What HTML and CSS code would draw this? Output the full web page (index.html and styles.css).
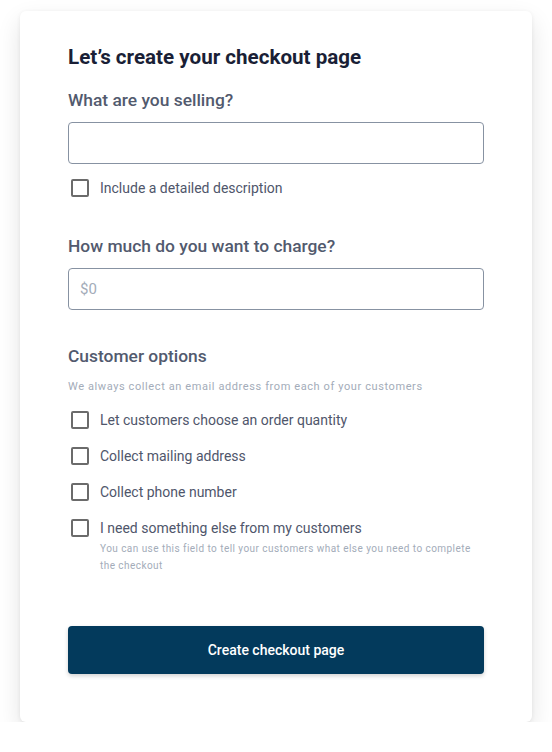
FILE: index.html
```html
<!DOCTYPE html>
<html>
<head>
<meta charset="utf-8">
<link rel="stylesheet" href="styles.css">
</head>
<body>
<div class="card">
  <h1 class="title">Let’s create your checkout page</h1>

  <div class="section s1">
    <div class="label">What are you selling?</div>
    <div class="input"></div>
    <div class="check-row first">
      <span class="box"></span>
      <span class="check-text">Include a detailed description</span>
    </div>
  </div>

  <div class="section s2">
    <div class="label">How much do you want to charge?</div>
    <div class="input"><span class="placeholder">$0</span></div>
  </div>

  <div class="section s3">
    <div class="label">Customer options</div>
    <div class="helper">We always collect an email address from each of your customers</div>
    <div class="check-list">
      <div class="check-row">
        <span class="box"></span>
        <span class="check-text">Let customers choose an order quantity</span>
      </div>
      <div class="check-row">
        <span class="box"></span>
        <span class="check-text">Collect mailing address</span>
      </div>
      <div class="check-row">
        <span class="box"></span>
        <span class="check-text">Collect phone number</span>
      </div>
      <div class="check-row top">
        <span class="box"></span>
        <div class="check-body">
          <span class="check-text">I need something else from my customers</span>
          <div class="sub">You can use this field to tell your customers what else you need to complete the checkout</div>
        </div>
      </div>
    </div>
  </div>

  <button class="btn">Create checkout page</button>
</div>
</body>
</html>
```

FILE: styles.css
```css
* { box-sizing: border-box; }
html, body { margin: 0; padding: 0; background: #ffffff; }
body {
  font-family: Roboto, "Liberation Sans", Arial, sans-serif;
  color: #4f566b;
  padding: 11px 20px 0;
}
.card {
  width: 512px;
  background: #fff;
  border-radius: 6px;
  box-shadow: 0 10px 24px rgba(0,0,0,0.11), 0 1px 4px rgba(0,0,0,0.07);
  padding: 32px 48px 48px;
}
.title {
  margin: 0;
  font-size: 20.6px;
  line-height: 28px;
  font-weight: 700;
  color: #1a1f36;
}
.s1 { margin-top: 17px; }
.s2 { margin-top: 36px; }
.s3 { margin-top: 34px; }
.label {
  font-size: 17.4px;
  line-height: 24px;
  font-weight: 500;
  color: #525a6e;
}
.input {
  margin-top: 10px;
  height: 42px;
  border: 1px solid #8792a2;
  border-radius: 4px;
  display: flex;
  align-items: center;
  padding: 0 11px;
}
.placeholder { font-size: 15px; color: #a3acb9; }
.check-row {
  display: flex;
  align-items: center;
  gap: 11px;
  height: 20px;
}
.check-row.first { margin-top: 14px; }
.box {
  flex: none;
  width: 18px;
  height: 18px;
  margin-left: 3px;
  border: 2px solid #6b6b6b;
  border-radius: 2px;
}
.check-text {
  font-size: 14px;
  line-height: 20px;
  color: #4f566b;
}
.helper {
  margin-top: 11px;
  font-size: 11px;
  line-height: 16px;
  letter-spacing: 0.6px;
  color: #a3acb9;
}
.check-list {
  margin-top: 15px;
  display: flex;
  flex-direction: column;
  gap: 16px;
}
.check-row.top { align-items: flex-start; height: auto; }
.check-row.top .box { margin-top: 1px; }
.sub {
  margin-top: 2px;
  font-size: 10px;
  line-height: 17px;
  color: #a3acb9;
  letter-spacing: 0.45px;
}
.btn {
  display: block;
  width: 100%;
  height: 48px;
  margin-top: 52px;
  background: #033a5c;
  color: #fff;
  border: 0;
  border-radius: 4px;
  font-family: Roboto, "Liberation Sans", Arial, sans-serif;
  font-size: 14px;
  font-weight: 500;
  box-shadow: 0 2px 4px rgba(0,0,0,0.18);
}
```
